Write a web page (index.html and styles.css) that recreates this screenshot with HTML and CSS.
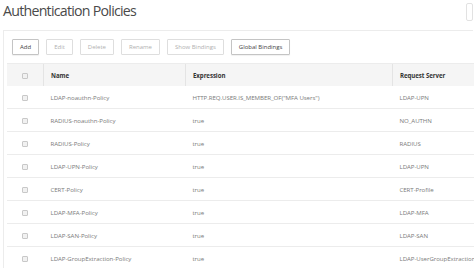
FILE: index.html
```html
<!DOCTYPE html>
<html lang="en">
<head>
  <meta charset="UTF-8">
  <meta name="viewport" content="width=device-width, initial-scale=1.0">
  <title>Authentication Policies</title>
  <link rel="stylesheet" href="styles.css">
</head>
<body>
  <div class="page-title">
    <h1>Authentication Policies</h1>
    <div class="title-action"></div>
  </div>

  <div class="panel">
    <!-- Toolbar -->
    <div class="toolbar">
      <button class="btn">Add</button>
      <button class="btn" disabled>Edit</button>
      <button class="btn" disabled>Delete</button>
      <button class="btn" disabled>Rename</button>
      <button class="btn" disabled>Show Bindings</button>
      <button class="btn">Global Bindings</button>
    </div>

    <!-- Policies table -->
    <table class="grid">
      <thead>
        <tr>
          <th class="col-check"><span class="check"></span></th>
          <th class="col-name">Name</th>
          <th class="col-expr">Expression</th>
          <th class="col-server">Request Server</th>
        </tr>
      </thead>
      <tbody>
        <tr>
          <td class="col-check"><span class="check"></span></td>
          <td>LDAP-noauthn-Policy</td>
          <td>HTTP.REQ.USER.IS_MEMBER_OF("MFA Users")</td>
          <td>LDAP-UPN</td>
        </tr>
        <tr>
          <td class="col-check"><span class="check"></span></td>
          <td>RADIUS-noauthn-Policy</td>
          <td>true</td>
          <td>NO_AUTHN</td>
        </tr>
        <tr>
          <td class="col-check"><span class="check"></span></td>
          <td>RADIUS-Policy</td>
          <td>true</td>
          <td>RADIUS</td>
        </tr>
        <tr>
          <td class="col-check"><span class="check"></span></td>
          <td>LDAP-UPN-Policy</td>
          <td>true</td>
          <td>LDAP-UPN</td>
        </tr>
        <tr>
          <td class="col-check"><span class="check"></span></td>
          <td>CERT-Policy</td>
          <td>true</td>
          <td>CERT-Profile</td>
        </tr>
        <tr>
          <td class="col-check"><span class="check"></span></td>
          <td>LDAP-MFA-Policy</td>
          <td>true</td>
          <td>LDAP-MFA</td>
        </tr>
        <tr>
          <td class="col-check"><span class="check"></span></td>
          <td>LDAP-SAN-Policy</td>
          <td>true</td>
          <td>LDAP-SAN</td>
        </tr>
        <tr>
          <td class="col-check"><span class="check"></span></td>
          <td>LDAP-GroupExtraction-Policy</td>
          <td>true</td>
          <td>LDAP-UserGroupExtraction</td>
        </tr>
      </tbody>
    </table>
  </div>
</body>
</html>
```

FILE: styles.css
```css
/* Page */
body {
  margin: 0;
  padding: 0;
  width: 474px;
  height: 268px;
  overflow: hidden;
  background: #fff;
  font-family: 'Open Sans', 'Liberation Sans', sans-serif;
  color: #555;
}
/* Title bar */
.page-title {
  display: flex;
  justify-content: space-between;
  align-items: flex-start;
  height: 30px;
  padding-left: 3px;
}
.page-title h1 {
  margin: 0;
  font-size: 14.2px;
  font-weight: 400;
  letter-spacing: -0.75px;
  line-height: 21px;
  color: #4a4a4a;
}
.title-action {
  width: 5px;
  height: 16px;
  margin-top: 3px;
  margin-right: 1px;
  border: 1px solid #e2e2e2;
  border-radius: 2px;
}
/* Main panel */
.panel {
  margin-left: 3px;
  width: 469px;
  border-top: 1px solid #ececec;
  border-left: 1px solid #ececec;
}
.toolbar {
  display: flex;
  gap: 7px;
  padding: 8px 8px 0;
  height: 16px;
  margin-bottom: 8px;
}
.btn {
  height: 16px;
  padding: 0 7px;
  font-family: 'Open Sans', 'Liberation Sans', sans-serif;
  font-size: 6px;
  color: #444;
  background: #fff;
  border: 1px solid #c4c4c4;
  border-radius: 1px;
  box-shadow: 0 1px 1px rgba(0, 0, 0, 0.06);
  cursor: pointer;
}
.btn:disabled {
  color: #b0b0b0;
  border-color: #dedede;
  box-shadow: none;
  cursor: default;
}
/* Table */
.grid {
  margin-left: 3px;
  border-collapse: collapse;
  table-layout: fixed;
  width: 540px;
  font-size: 6.1px;
  letter-spacing: -0.05px;
}
.grid th,
.grid td {
  height: 22px;
  padding: 0 0 0 7px;
  text-align: left;
  white-space: nowrap;
}
.grid th {
  background: #f5f5f5;
  border-top: 1px solid #ececec;
  border-left: 1px solid #e4e4e4;
  font-weight: 700;
  color: #333;
}
.grid th:first-child {
  border-left: none;
}
.grid td {
  border-bottom: 1px solid #ececec;
  color: #7a7a7a;
}
.grid .col-check {
  width: 36px;
  padding: 0;
  text-align: center;
}
.col-name { width: 134px; }
.col-expr { width: 199px; }
.col-server { width: 150px; }
.check {
  display: inline-block;
  width: 4px;
  height: 4px;
  vertical-align: middle;
  border: 1px solid #c8c8c8;
  background: #f1f1f1;
  border-radius: 1px;
}
```
